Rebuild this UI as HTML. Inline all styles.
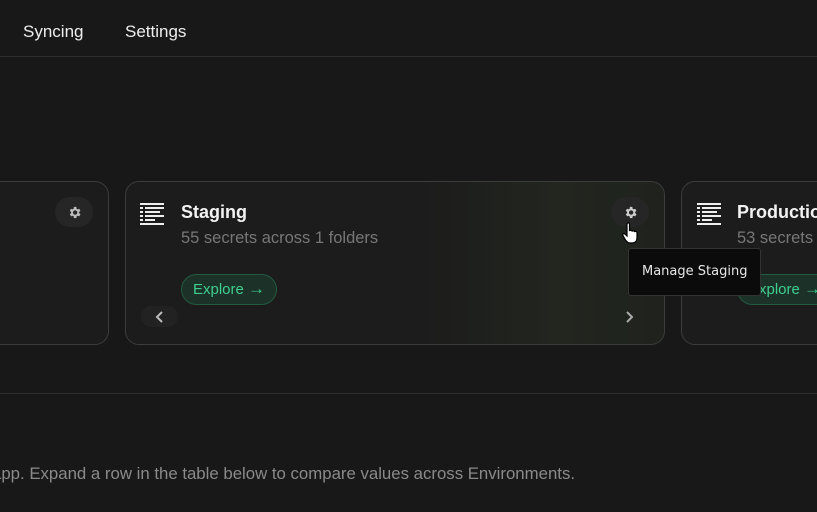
<!DOCTYPE html>
<html><head><style>
*{margin:0;padding:0;box-sizing:border-box}
body{width:817px;height:512px;background:#181818;font-family:"Liberation Sans",sans-serif;position:relative;overflow:hidden;color:#eee}
.nav{position:absolute;top:22px;font-size:17px;color:#ededed}
.hl{position:absolute;left:0;width:817px;height:1px;background:#2c2c2c}
.card{position:absolute;top:181px;height:164px;border:1px solid #3c3c3c;border-radius:14px;background:#1c1c1c}
.gear{position:absolute;width:38px;height:30px;border-radius:15px;background:#262626;display:flex;align-items:center;justify-content:center}
.title{position:absolute;font-size:18px;font-weight:bold;color:#f2f2f2}
.sub{position:absolute;font-size:16.5px;color:#777}
.exp{position:absolute;height:31px;border:1px solid #245a40;background:#1c3128;border-radius:16px;color:#3ecf8e;font-size:15px;padding:6px 11px}
.exp b{font-size:17px;line-height:15px}
.ico{position:absolute;width:24px;height:22px}
</style></head><body>
<div class="nav" style="left:23px">Syncing</div>
<div class="nav" style="left:125px">Settings</div>
<div class="hl" style="top:56px"></div>

<div class="card" style="left:-20px;width:129px">
<div class="gear" style="left:74px;top:15px"><svg width="15" height="15" viewBox="0 0 24 24"><path fill="#bbb" d="M19.4 13a7.5 7.5 0 000-2l2.1-1.6-2-3.5-2.5 1a7.6 7.6 0 00-1.7-1L15 3h-4l-.4 2.9a7.6 7.6 0 00-1.7 1l-2.5-1-2 3.5L6.6 11a7.5 7.5 0 000 2l-2.1 1.6 2 3.5 2.5-1a7.6 7.6 0 001.7 1L11 21h4l.4-2.9a7.6 7.6 0 001.7-1l2.5 1 2-3.5zM13 15.5a3.5 3.5 0 110-7 3.5 3.5 0 010 7z"/></svg></div>
</div>

<div class="card" style="left:125px;width:540px;background:linear-gradient(90deg,#1c1c1c 55%,#22261f 80%,#1f221d 100%)">
<svg class="ico" style="left:14px;top:21px" viewBox="0 0 24 22"><g fill="#eee"><rect x="0" y="0" width="24" height="2"/><rect x="0" y="4" width="3" height="2"/><rect x="5" y="4" width="19" height="2"/><rect x="0" y="8" width="3" height="2"/><rect x="5" y="8" width="15" height="2"/><rect x="0" y="12" width="3" height="2"/><rect x="5" y="12" width="19" height="2"/><rect x="0" y="16" width="3" height="2"/><rect x="5" y="16" width="10" height="2"/><rect x="0" y="20" width="24" height="2"/></g></svg>
<div class="title" style="left:55px;top:20px">Staging</div>
<div class="sub" style="left:55px;top:47px">55 secrets across 1 folders</div>
<div class="exp" style="left:55px;top:92px">Explore <b>→</b></div>
<div class="gear" style="left:15px;top:124px;width:37px;height:21px;background:#222"><svg width="10" height="12" viewBox="0 0 10 12"><path d="M7 1L2 6l5 5" stroke="#bbb" stroke-width="2" fill="none"/></svg></div>
<div style="position:absolute;left:498px;top:128px"><svg width="10" height="12" viewBox="0 0 10 12"><path d="M3 1l5 5-5 5" stroke="#aaa" stroke-width="2" fill="none"/></svg></div>
<div class="gear" style="left:485px;top:15px"><svg width="15" height="15" viewBox="0 0 24 24"><path fill="#ccc" d="M19.4 13a7.5 7.5 0 000-2l2.1-1.6-2-3.5-2.5 1a7.6 7.6 0 00-1.7-1L15 3h-4l-.4 2.9a7.6 7.6 0 00-1.7 1l-2.5-1-2 3.5L6.6 11a7.5 7.5 0 000 2l-2.1 1.6 2 3.5 2.5-1a7.6 7.6 0 001.7 1L11 21h4l.4-2.9a7.6 7.6 0 001.7-1l2.5 1 2-3.5zM13 15.5a3.5 3.5 0 110-7 3.5 3.5 0 010 7z"/></svg></div>
</div>

<div class="card" style="left:681px;width:160px">
<svg class="ico" style="left:15px;top:21px" viewBox="0 0 24 22"><g fill="#eee"><rect x="0" y="0" width="24" height="2"/><rect x="0" y="4" width="3" height="2"/><rect x="5" y="4" width="19" height="2"/><rect x="0" y="8" width="3" height="2"/><rect x="5" y="8" width="15" height="2"/><rect x="0" y="12" width="3" height="2"/><rect x="5" y="12" width="19" height="2"/><rect x="0" y="16" width="3" height="2"/><rect x="5" y="16" width="10" height="2"/><rect x="0" y="20" width="24" height="2"/></g></svg>
<div class="title" style="left:55px;top:20px">Production</div>
<div class="sub" style="left:55px;top:47px">53 secrets</div>
<div class="exp" style="left:55px;top:92px">Explore <b>→</b></div>
</div>

<svg style="position:absolute;left:621px;top:222px" width="20" height="22" viewBox="0 0 20 22"><path d="M6 2c0-1.5 2.5-1.5 2.5 0v7c.5-1 2.5-1 2.5.5.5-1 2.5-1 2.5.5.5-1 2.5-.8 2.5.8V16c0 3-2 5-5 5h-2c-2 0-3-1-4.5-3L2 13.5c-.8-1.3.8-2.5 2-1.3L6 14z" fill="#fff" stroke="#000" stroke-width="1.2"/></svg>

<div style="position:absolute;left:628px;top:248px;width:133px;height:48px;background:#0b0b0b;border:1px solid #333;border-radius:3px;font-family:'DejaVu Sans',sans-serif;font-size:13px;color:#e6e6e6;padding:15px 0 0 13px">Manage Staging</div>

<div class="hl" style="top:393px"></div>
<div style="position:absolute;left:-8px;top:464px;font-size:16.8px;color:#8a8a8a;white-space:nowrap">app. Expand a row in the table below to compare values across Environments.</div>
</body></html>
